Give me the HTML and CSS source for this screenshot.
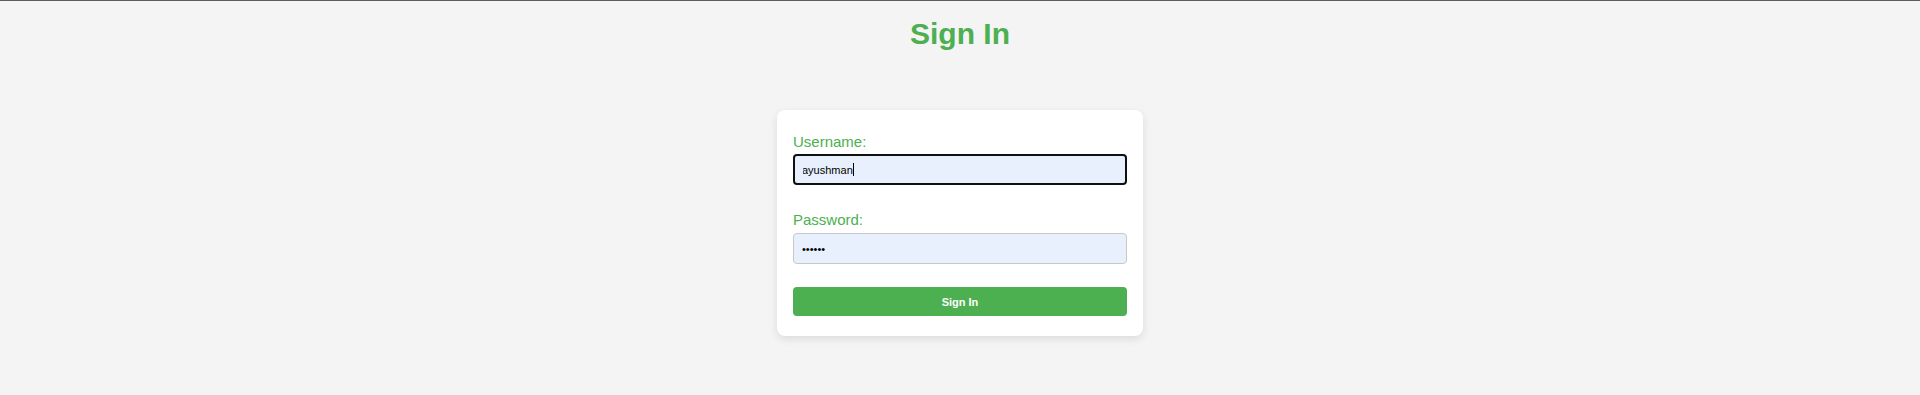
FILE: index.html
```html
<!DOCTYPE html>
<html lang="en">
<head>
<meta charset="utf-8">
<title>Sign In</title>
<link rel="stylesheet" href="styles.css">
</head>
<body>
  <h1 class="page-title">Sign In</h1>
  <main class="main">
    <form class="card">
      <label class="field-label" for="username">Username:</label>
      <div class="field-wrap">
        <input class="field field-focused" id="username" type="text" value="ayushman">
        <span class="caret"></span>
      </div>
      <label class="field-label field-label-gap" for="password">Password:</label>
      <input class="field" id="password" type="password" value="123456">
      <button class="submit" type="button">Sign In</button>
    </form>
  </main>
</body>
</html>
```

FILE: styles.css
```css
html, body {
  height: 100%;
}
body {
  margin: 0;
  box-sizing: border-box;
  border-top: 1px solid #5d5d5d;
  background: #f4f4f4;
  font-family: "Liberation Sans", Arial, sans-serif;
  display: flex;
  flex-direction: column;
}
.page-title {
  margin: 15.6px 0 0;
  text-align: center;
  font-size: 30px;
  font-weight: bold;
  color: #4caf50;
  line-height: 34.5px;
}
.main {
  flex: 1;
  display: flex;
  align-items: center;
  justify-content: center;
}
.card {
  box-sizing: border-box;
  width: 366px;
  padding: 23.5px 16px 20.5px;
  background: #ffffff;
  border-radius: 8px;
  box-shadow: 0 3px 9px rgba(0, 0, 0, 0.1);
  display: flex;
  flex-direction: column;
}
.field-label {
  display: block;
  font-size: 15px;
  line-height: 17.25px;
  color: #4caf50;
  margin-bottom: 4px;
}
.field-label-gap {
  margin-top: 26px;
  margin-bottom: 5px;
}
.field-wrap {
  position: relative;
}
.field {
  display: block;
  box-sizing: border-box;
  width: 100%;
  height: 30.6px;
  padding: 8px;
  border: 1px solid #c8c8c8;
  border-radius: 4px;
  background: #e8f0fe;
  font-family: "Liberation Sans", Arial, sans-serif;
  font-size: 11px;
  color: #000;
  outline: none;
}
.field-focused {
  border: 2px solid #101010;
  padding: 7px 8px 7px 8px;
  text-indent: -1px;
}
.caret {
  position: absolute;
  left: 60px;
  top: 9px;
  width: 1px;
  height: 13px;
  background: #000;
}
.submit {
  margin-top: 23.5px;
  height: 28.6px;
  padding: 0;
  border: none;
  border-radius: 4px;
  background: #4caf50;
  color: #ffffff;
  font-family: "Liberation Sans", Arial, sans-serif;
  font-size: 11px;
  font-weight: bold;
}
```
